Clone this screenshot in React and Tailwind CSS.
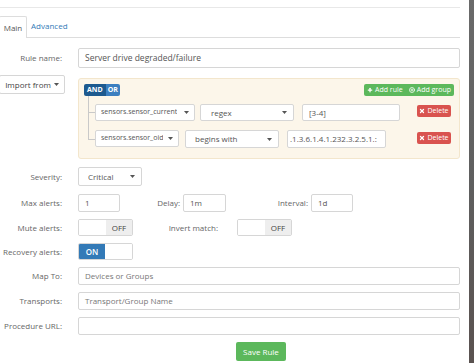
import { Plus, PlusCircle, X } from 'lucide-react'

const font = { fontFamily: '"Open Sans", "DejaVu Sans", sans-serif' }

function Caret() {
  return (
    <svg width="5" height="3" viewBox="0 0 5 3" className="shrink-0 ml-[2px] fill-[#555]">
      <path d="M0 0h5L2.5 3z" />
    </svg>
  )
}

function Label({ children, className = '' }) {
  return (
    <div className={`w-[62px] shrink-0 text-right text-[8px] text-[#666] ${className}`}>{children}</div>
  )
}

function Field({ children, className = '', size = 'text-[8px]', color = 'text-[#555]' }) {
  return (
    <div className={`border border-[#d6d6d6] rounded-[2px] bg-white flex items-center ${size} ${color} ${className}`}>
      {children}
    </div>
  )
}

function Select({ children, className = '', size = 'text-[8px]' }) {
  return (
    <div className={`border border-[#d6d6d6] rounded-[2px] bg-white flex items-center justify-between text-[#555] whitespace-nowrap ${size} ${className}`}>
      <span className="min-w-0 overflow-hidden">{children}</span>
      <Caret />
    </div>
  )
}

function Toggle({ on, className = '' }) {
  return (
    <div className={`w-[55px] h-[17px] border border-[#d6d6d6] rounded-[2px] flex overflow-hidden text-[8px] ${className}`}>
      {on ? (
        <>
          <div className="w-[26px] bg-[#337ab7] text-white font-semibold flex items-center justify-center">ON</div>
          <div className="flex-1 bg-white" />
        </>
      ) : (
        <>
          <div className="w-[27px] bg-white" />
          <div className="flex-1 bg-[#eeeeee] text-[#444] flex items-center justify-center">OFF</div>
        </>
      )}
    </div>
  )
}

function DeleteBtn({ className = '' }) {
  return (
    <div className={`w-[34px] h-[12px] bg-[#d9534f] rounded-[2px] text-white text-[7px] flex items-center justify-center gap-[2px] ${className}`}>
      <X className="w-[6px] h-[6px]" strokeWidth={5} />
      Delete
    </div>
  )
}

export default function App() {
  return (
    <div className="w-[474px] h-[363px] bg-white flex overflow-hidden" style={font}>
      <div className="flex-1 flex flex-col">
        <div className="h-[8px] border-b border-[#e8e8e8]" />

        {/* tabs */}
        <div className="h-[30px] border-b border-[#dddddd] flex items-end">
          <div className="h-[22px] w-[28px] -ml-px border border-b-0 border-[#dddddd] rounded-t-[2px] bg-white flex items-center justify-center text-[8px] text-[#555] -mb-px">
            Main
          </div>
          <div className="h-[22px] flex items-center pl-[4px] text-[8px] text-[#337ab7]">Advanced</div>
        </div>

        {/* rule name */}
        <div className="mt-[10px] flex items-center gap-[16px]">
          <Label>Rule name:</Label>
          <Field className="flex-1 h-[20px] px-[6px]" size="text-[8.5px]">Server drive degraded/failure</Field>
        </div>

        {/* query builder */}
        <div className="mt-[7px] flex gap-[13px]">
          <div className="w-[66px] -ml-px h-[19px] border border-[#d6d6d6] rounded-[2px] flex items-center justify-center gap-[1px] text-[8px] text-[#444]">
            Import from <Caret />
          </div>
          <div className="flex-1 mt-[3px] h-[81px] bg-[#fcf6ea] border border-[#f3e6cc] rounded-[3px] px-[5px] pt-[5px] relative">
            <div className="flex items-start justify-between">
              <div className="flex h-[12px] rounded-[2px] overflow-hidden text-[7px] font-bold text-white">
                <div className="bg-[#1d5a8f] px-[3px] flex items-center">AND</div>
                <div className="bg-[#3c7fc0] px-[2px] flex items-center">OR</div>
              </div>
              <div className="flex h-[12px] rounded-[2px] overflow-hidden bg-[#5cb85c] text-white text-[7px]">
                <div className="flex items-center gap-[2px] px-[3px]">
                  <Plus className="w-[6px] h-[6px]" strokeWidth={5} />Add rule
                </div>
                <div className="flex items-center gap-[2px] px-[3px]">
                  <PlusCircle className="w-[6px] h-[6px]" strokeWidth={3} />Add group
                </div>
              </div>
            </div>
            {/* tree lines */}
            <div className="absolute left-[9px] top-[17px] w-[6px] h-[44px] border-l border-[#c9c9c9]" />
            <div className="absolute left-[9px] top-[33px] w-[7px] border-t border-[#c9c9c9]" />
            <div className="absolute left-[9px] top-[60px] w-[7px] border-t border-[#c9c9c9] rounded-bl-[2px]" />

            <div className="ml-[11px] mt-[8px] flex items-start">
              <Select className="w-[100px] h-[17px] pl-[5px] pr-[5px]" size="text-[7px]">sensors.sensor_current</Select>
              <Select className="ml-[5px] w-[94px] h-[17px] pl-[10px] pr-[6px]">regex</Select>
              <Field className="ml-[8px] w-[98px] h-[17px] px-[6px]">[3-4]</Field>
              <DeleteBtn className="ml-[17px] mt-px" />
            </div>
            <div className="ml-[11px] mt-[9px] flex items-start">
              <Select className="w-[84px] h-[17px] pl-[5px] pr-[5px]" size="text-[7px]">sensors.sensor_oid</Select>
              <Select className="ml-[6px] w-[94px] h-[18px] pl-[9px] pr-[6px]">begins with</Select>
              <Field className="ml-[8px] w-[99px] h-[18px] px-[2px] overflow-hidden whitespace-nowrap">.1.3.6.1.4.1.232.3.2.5.1.:</Field>
              <DeleteBtn className="ml-[31px] mt-[2px]" />
            </div>
          </div>
        </div>

        {/* severity */}
        <div className="mt-[8px] flex items-center gap-[16px]">
          <Label>Severity:</Label>
          <Select className="w-[64px] h-[19px] pl-[9px] pr-[6px]">Critical</Select>
        </div>

        {/* max alerts */}
        <div className="mt-[8px] flex items-center gap-[16px]">
          <Label>Max alerts:</Label>
          <Field className="w-[42px] h-[18px] px-[6px]">1</Field>
          <div className="w-[44px] text-right text-[8px] text-[#666]">Delay:</div>
          <Field className="-ml-[13px] w-[43px] h-[18px] px-[6px]">1m</Field>
          <div className="w-[66px] text-right text-[8px] text-[#666]">Interval:</div>
          <Field className="-ml-[13px] w-[42px] h-[18px] px-[6px]">1d</Field>
        </div>

        {/* mute */}
        <div className="mt-[7px] flex items-center gap-[16px]">
          <Label>Mute alerts:</Label>
          <Toggle />
          <div className="w-[69px] text-right text-[8px] text-[#666]">Invert match:</div>
          <Toggle className="ml-[3px]" />
        </div>

        {/* recovery */}
        <div className="mt-[7px] flex items-center gap-[16px]">
          <Label>Recovery alerts:</Label>
          <Toggle on />
        </div>

        <div className="mt-[7px] flex items-center gap-[16px]">
          <Label>Map To:</Label>
          <Field className="flex-1 h-[18px] px-[6px]" color="text-[#777]">Devices or Groups</Field>
        </div>
        <div className="mt-[7px] flex items-center gap-[16px]">
          <Label>Transports:</Label>
          <Field className="flex-1 h-[18px] px-[6px]" color="text-[#777]">Transport/Group Name</Field>
        </div>
        <div className="mt-[7px] flex items-center gap-[16px]">
          <Label>Procedure URL:</Label>
          <Field className="flex-1 h-[18px] px-[6px]" />
        </div>

        <div className="mt-[7px] flex justify-center pl-[68px] pr-[6px]">
          <div className="w-[50px] h-[19px] bg-[#5cb85c] rounded-[2px] text-white text-[8px] flex items-center justify-center">
            Save Rule
          </div>
        </div>
      </div>
      <div className="w-[9px] bg-white" />
      <div className="w-[5px] bg-gradient-to-b from-[#6a6a6a] via-[#5f5f5f] to-[#5a5250]" />
    </div>
  )
}
